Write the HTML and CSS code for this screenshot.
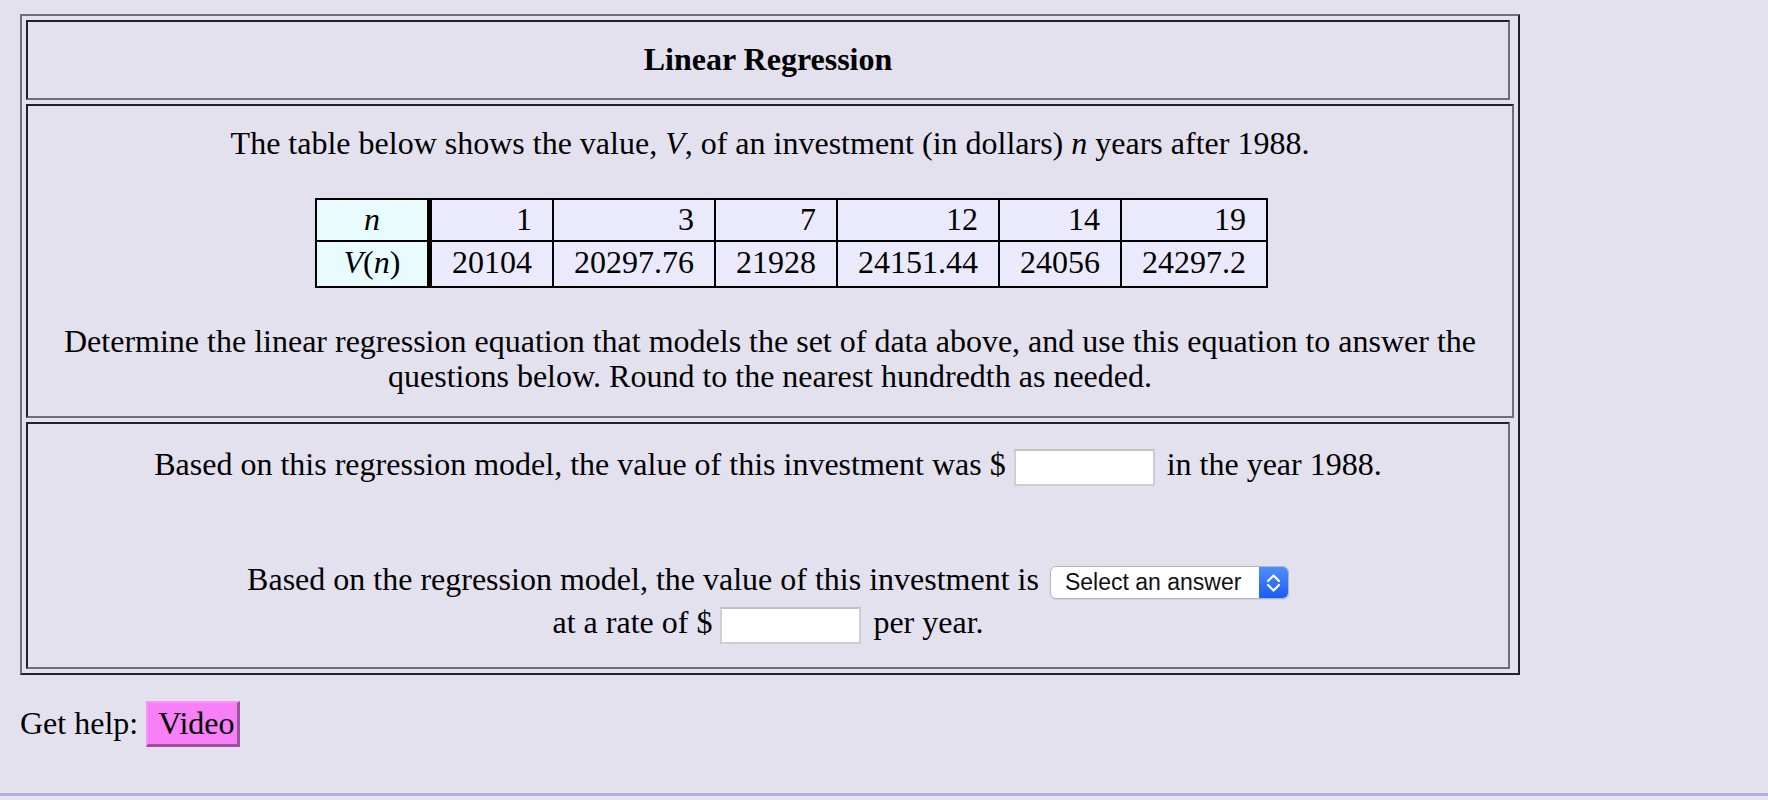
FILE: index.html
```html
<!DOCTYPE html>
<html lang="en">
<head>
<meta charset="utf-8">
<title>Linear Regression</title>
<link rel="stylesheet" href="styles.css">
</head>
<body>
<div class="page">
  <div class="question">
    <div class="cell title-cell">
      <h1 class="title">Linear Regression</h1>
    </div>
    <div class="cell intro-cell">
      <p class="intro">The table below shows the value, <i class="mv">V</i>, of an investment (in dollars) <i class="mv">n</i> years after 1988.</p>
      <div class="table-wrap">
        <table class="data">
          <tr>
            <th class="head"><i class="mv">n</i></th>
            <td>1</td><td>3</td><td>7</td><td>12</td><td>14</td><td>19</td>
          </tr>
          <tr class="vals">
            <th class="head"><i class="mv">V</i>(<i class="mv">n</i>)</th>
            <td>20104</td><td>20297.76</td><td>21928</td><td>24151.44</td><td>24056</td><td>24297.2</td>
          </tr>
        </table>
      </div>
      <p class="instructions">Determine the linear regression equation that models the set of data above, and use this equation to answer the questions below. Round to the nearest hundredth as needed.</p>
    </div>
    <div class="cell answer-cell">
      <p class="q q1">Based on this regression model, the value of this investment was $ <input class="answer" type="text" aria-label="value in 1988"> in the year 1988.</p>
      <p class="q q2">
        <span class="q-line">Based on the regression model, the value of this investment is <span class="select" role="listbox" aria-label="Select an answer"><span class="select-text">Select an answer</span><span class="select-arrows"><svg width="29" height="33" viewBox="0 0 29 33" aria-hidden="true"><polyline points="9,15 14.5,9.5 20,15" fill="none" stroke="#fff" stroke-width="2.2" stroke-linecap="round" stroke-linejoin="round"/><polyline points="9,19 14.5,24.5 20,19" fill="none" stroke="#fff" stroke-width="2.2" stroke-linecap="round" stroke-linejoin="round"/></svg></span></span></span>
        <span class="q-line second">at a rate of $ <input class="answer" type="text" aria-label="rate per year"> per year.</span>
      </p>
    </div>
  </div>
  <p class="help">Get help: <button class="video-btn" type="button">Video</button></p>
</div>
<div class="footer-rule"></div>
</body>
</html>
```

FILE: styles.css
```css
html, body {
  margin: 0;
  padding: 0;
}

body {
  background: #e4e1ef;
  color: #000;
  font-family: "Liberation Serif", "Times New Roman", serif;
  font-size: 32px;
  line-height: 35px;
}

.page {
  padding: 14px 0 0 20px;
}

.question {
  width: 1500px;
  box-sizing: border-box;
  border: 2px solid;
  border-color: #6f6e72 #222126 #222126 #6f6e72;
  padding: 4px;
  display: flex;
  flex-direction: column;
  gap: 4px;
}

.cell {
  border: 2px solid;
  border-color: #222126 #6f6e72 #6f6e72 #222126;
  text-align: center;
}

.title-cell {
  margin-right: 4px;
  padding: 20px 0 21px;
}

.title {
  margin: 0;
  font-size: 32px;
  font-weight: bold;
  line-height: 35px;
}

.intro-cell {
  padding: 20px 0 22px;
}

.intro {
  margin: 0;
}

.mv {
  font-style: italic;
}

.table-wrap {
  display: flex;
  justify-content: center;
  padding-left: 43px;
  margin-top: 37px;
}

.data {
  border-collapse: collapse;
  border: 2px solid #000;
}

.data td,
.data th {
  border: 2px solid #000;
  padding: 2px 20px 3px;
  background: #ebe9fc;
  text-align: right;
  font-weight: normal;
  line-height: 35px;
}

.data .head {
  background: #e8fcfd;
  text-align: center;
  width: 70px;
  border-right-width: 5px;
}

.data .vals td,
.data .vals th {
  padding: 3px 20px 6px;
}

.instructions {
  margin: 36px 0 0;
}

.answer-cell {
  margin-right: 4px;
  padding: 23px 0 23px;
}

.q {
  margin: 0;
}

.q2 {
  margin-top: 76px;
}

.q-line {
  display: block;
}

.q-line.second {
  margin-top: 6px;
}

.answer {
  box-sizing: border-box;
  width: 141px;
  height: 37px;
  margin: 0 4px 0 0;
  padding: 0 6px;
  border: 2px solid #cfcdd3;
  border-top-color: #c2c0c6;
  background: #fff;
  vertical-align: middle;
  font-size: 23px;
}

.select {
  display: inline-flex;
  box-sizing: border-box;
  width: 239px;
  height: 33px;
  margin-left: 3px;
  border: 1px solid #b7b4c0;
  border-radius: 6px;
  background: #fff;
  vertical-align: middle;
  overflow: hidden;
  text-align: left;
  box-shadow: 0 1px 1px rgba(0, 0, 0, 0.08);
}

.select-text {
  flex: 1;
  padding-left: 14px;
  font-family: "Liberation Sans", Arial, sans-serif;
  font-size: 23px;
  line-height: 31px;
  color: #111;
  white-space: nowrap;
}

.select-arrows {
  width: 29px;
  display: flex;
  align-items: center;
  justify-content: center;
  background: linear-gradient(#4f8ff9, #1b5cf6);
}

.select-arrows svg {
  display: block;
}

.help {
  margin: 26px 0 0;
}

.video-btn {
  margin: 0;
  padding: 3px 3px 3px 10px;
  border-style: solid;
  border-width: 2px 3px 3px 2px;
  border-color: #fb93fb #9e4f9e #9e4f9e #fb93fb;
  background: #f77ff7;
  font-family: "Liberation Serif", "Times New Roman", serif;
  font-size: 32px;
  line-height: 35px;
  color: #000;
  cursor: pointer;
}

.footer-rule {
  margin-top: 46px;
  border-top: 3px solid #b5aedb;
  height: 20px;
  background: #e8e3ef;
}
```
